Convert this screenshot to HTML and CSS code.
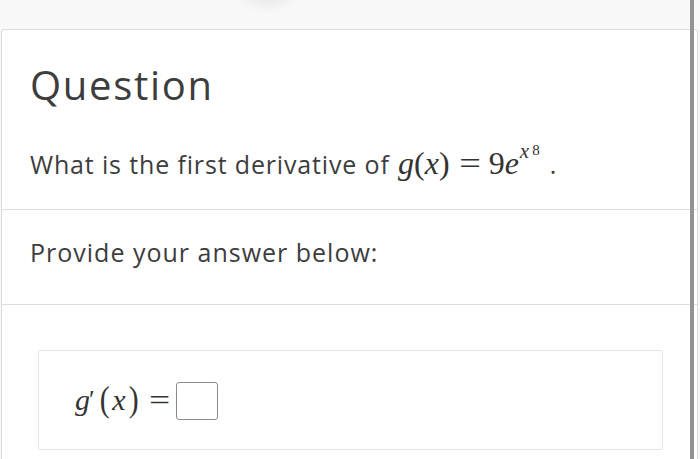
FILE: index.html
```html
<!DOCTYPE html>
<html>
<head>
<meta charset="utf-8">
<link rel="stylesheet" href="styles.css">
</head>
<body>
<div class="topbar"><div class="knob"></div></div>
<div class="card">
  <section class="sec sec-q">
    <h1 class="title">Question</h1>
    <p class="qtext">What is the first derivative of <span class="math"><i>g</i>(<i>x</i>)<span class="op">=</span>9<i>e</i><sup class="sup1"><i>x</i><sup class="sup2">8</sup></sup></span><span class="dot">.</span></p>
  </section>
  <section class="sec sec-p">
    <p class="ptext">Provide your answer below:</p>
  </section>
  <section class="sec sec-a">
    <div class="answer">
      <span class="amath"><i>g</i><span class="prime">′</span><span class="paren">(</span><i>x</i><span class="paren">)</span><span class="aop">=</span><span class="box"></span></span>
    </div>
  </section>
</div>
<div class="scrollbar"></div>
</body>
</html>
```
FILE: styles.css
```css
html, body {
  margin: 0;
  padding: 0;
  background: #f8f8f8;
  overflow: hidden;
}
body {
  width: 700px;
  height: 459px;
  position: relative;
  font-family: "Open Sans", "Liberation Sans", sans-serif;
  color: #3d3d3d;
}
.topbar {
  height: 29px;
  position: relative;
  overflow: hidden;
}
.knob {
  position: absolute;
  left: 232px;
  top: -22px;
  width: 70px;
  height: 36px;
  border-radius: 50%;
  background: radial-gradient(ellipse at 50% 30%, rgba(0,0,0,0.10) 0%, rgba(0,0,0,0.04) 40%, rgba(0,0,0,0) 70%);
}
.card {
  margin-left: 1px;
  width: 695px;
  background: #fff;
  border: 1px solid #dcdcdc;
  border-radius: 3px;
  height: 440px;
}
.sec {
  padding: 0 34px 0 28px;
}
.sec-q {
  padding-top: 31px;
  padding-bottom: 28px;
  border-bottom: 1px solid #dedede;
}
.title {
  margin: 0;
  font-size: 40px;
  font-weight: 400;
  line-height: 48px;
  letter-spacing: 1.7px;
}
.qtext {
  margin: 36px 0 0;
  font-size: 25px;
  line-height: 36px;
  height: 36px;
  white-space: nowrap;
  letter-spacing: 0.85px;
}
.math {
  font-family: "Liberation Serif", "Times New Roman", serif;
  font-size: 32px;
  color: #333;
  letter-spacing: 0;
  margin-left: 1px;
}
.math i { font-style: italic; }
.op {
  display: inline-block;
  margin: 0 10px 0 11px;
  transform: scaleX(1.2);
}
.sup1 {
  font-size: 21px;
  vertical-align: 16px;
  line-height: 0;
  margin-left: 1px;
}
.sup2 {
  font-size: 15px;
  vertical-align: 3px;
  font-style: normal;
  line-height: 0;
  margin-left: 3px;
}
.dot {
  margin-left: 10px;
}
.sec-p {
  padding-top: 24px;
  padding-bottom: 34px;
  border-bottom: 1px solid #dedede;
}
.ptext {
  margin: 0;
  font-size: 25px;
  line-height: 36px;
  letter-spacing: 1px;
}
.sec-a {
  padding-top: 45px;
  padding-left: 36px;
}
.answer {
  height: 98px;
  border: 1px solid #e6e6e6;
  border-radius: 2px;
  display: flex;
  align-items: center;
  padding-left: 36px;
}
.amath {
  font-family: "Liberation Serif", "Times New Roman", serif;
  font-size: 30px;
  color: #333;
  display: flex;
  align-items: center;
}
.prime { margin-left: -1px; margin-right: 2px; font-size: 26px; }
.paren { font-size: 35px; margin: 0 2px; transform: scaleX(0.85); display: inline-block; }
.aop {
  display: inline-block;
  margin: 0 8px 0 10px;
  transform: scaleX(1.25);
}
.box {
  width: 40px;
  height: 36px;
  border: 1.5px solid #8a8a8a;
  border-radius: 3px;
  margin-top: 2px;
}
.scrollbar {
  position: absolute;
  left: 690px;
  top: 0;
  width: 4px;
  height: 459px;
  background: #939393;
}
```
